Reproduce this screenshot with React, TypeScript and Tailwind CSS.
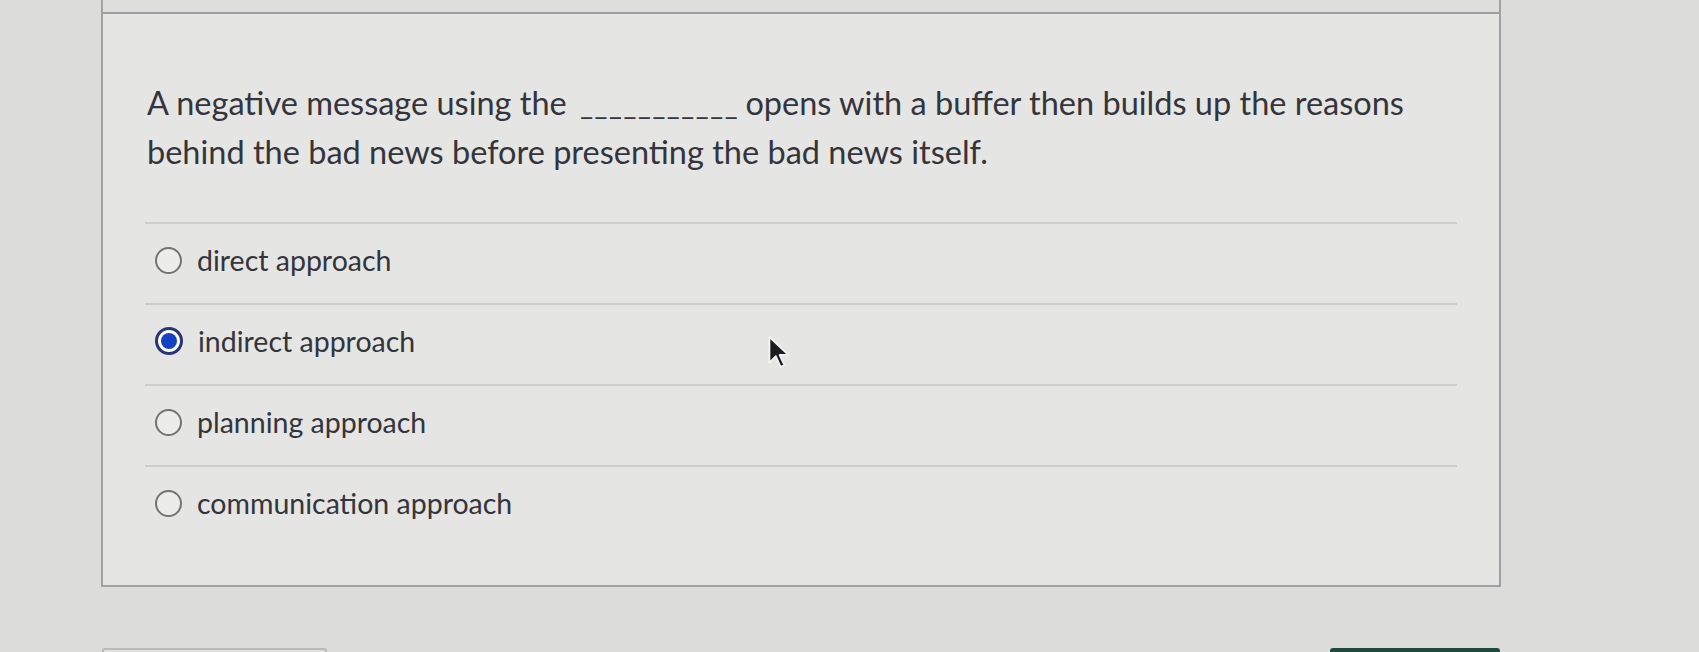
import React from "react";

const options = [
  { label: "direct approach", selected: false },
  { label: "indirect approach", selected: true },
  { label: "planning approach", selected: false },
  { label: "communication approach", selected: false },
];

function Radio({ selected }: { selected: boolean }) {
  if (selected) {
    return (
      <span className="flex h-[28px] w-[28px] shrink-0 items-center justify-center rounded-full border-[3px] border-[#27357a] bg-white">
        <span className="h-[16px] w-[16px] rounded-full bg-[#1342c4]" />
      </span>
    );
  }
  return <span className="h-[27px] w-[27px] shrink-0 rounded-full border-2 border-[#737373] bg-[#ececea]" />;
}

function Cursor() {
  return (
    <svg className="absolute left-[766px] top-[335px]" width="26" height="36" viewBox="0 0 24 34">
      <path
        d="M3 2 L3 26 L9 20 L13.5 30 L17 28.5 L12.5 18.8 L20.5 18.5 Z"
        fill="#1c1c20"
        stroke="#f4f4f4"
        strokeWidth="1.6"
        strokeLinejoin="round"
      />
    </svg>
  );
}

export default function App() {
  return (
    <div
      className="relative h-[652px] w-[1699px] overflow-hidden bg-[#dcdcda] text-[#34343c]"
      style={{ fontFamily: "Lato, 'Open Sans', sans-serif" }}
    >
      <div className="ml-[101px] flex w-[1400px] flex-col">
        {/* strip of the card above */}
        <div className="h-[12px] border-x-2 border-[#a3a3a6] bg-[#dededc]" />
        <div className="flex h-[575px] flex-col border-2 border-[#a0a0a4] bg-[#e5e5e3]">
          <p className="mt-[64px] pl-[44px] text-[32.5px] leading-[49px]">
            A negative message using the{" "}
            <span className="ml-[5px] mr-[-2px] text-[28px] leading-none tracking-[1.6px]">___________</span> opens
            with a buffer then builds up the reasons
            <br />
            behind the bad news before presenting the bad news itself.
          </p>
          <div className="mx-[42px] mt-[46px] flex flex-col">
            {options.map((o) => (
              <div
                key={o.label}
                className="flex h-[81px] items-center gap-[15px] border-t-2 border-[#cdcdcb] pb-[7px] pl-[10px]"
              >
                <Radio selected={o.selected} />
                <span className="text-[28.5px] leading-none">{o.label}</span>
              </div>
            ))}
          </div>
        </div>
      </div>
      <div className="mt-[61px] flex justify-between pl-[102px] pr-[199px]">
        <div className="h-[12px] w-[225px] rounded-t-[3px] border-2 border-[#b9b9b9] bg-[#e0e0de]" />
        <div className="h-[12px] w-[170px] rounded-t-[3px] bg-[#1d4a3d]" />
      </div>
      <Cursor />
    </div>
  );
}
